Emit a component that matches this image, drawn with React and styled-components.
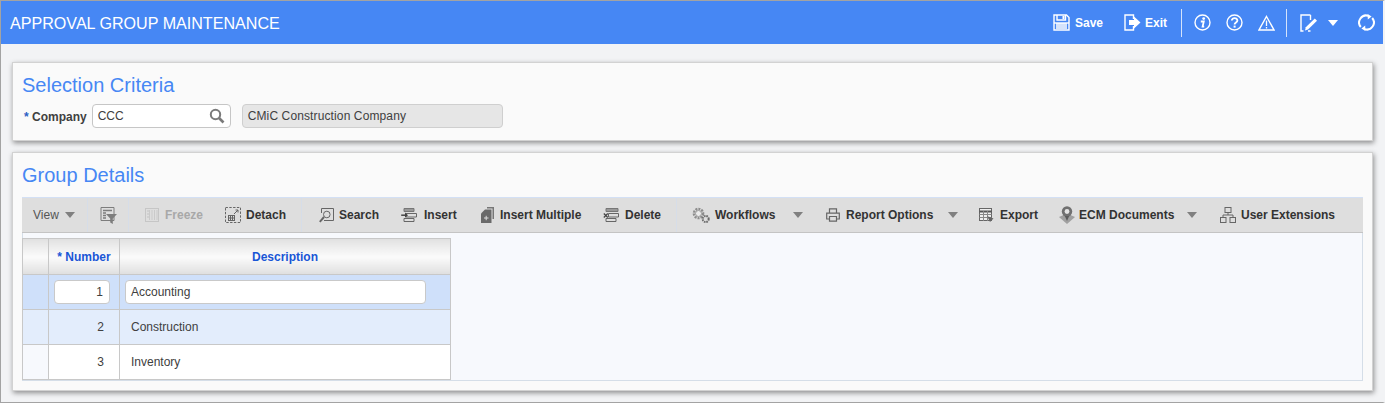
import React from "react";
import styled, { createGlobalStyle } from "styled-components";

const GlobalStyle = createGlobalStyle`
  html, body { margin: 0; padding: 0; background: #f2f3f5; }
  body { font-family: "Liberation Sans", Arial, sans-serif; font-size: 12px; color: #333; }
`;

const Page = styled.div`
  width: 1385px;
  height: 403px;
  box-sizing: border-box;
  border: 1px solid #a3a3a3;
  border-right: 2px solid #f2f3f5;
  background: #f2f3f5;
  overflow: hidden;
`;

const Header = styled.header`
  height: 43px;
  background: #4687f4;
  display: flex;
  align-items: center;
  padding: 0 8px 0 9px;
  color: #fff;
`;

const Title = styled.h1`
  margin: 2px 0 0;
  font-size: 16.1px;
  font-weight: 400;
  flex: 1;
`;

const HeadBtn = styled.div`
  display: flex;
  align-items: center;
  gap: ${(p) => p.$gap ?? 5}px;
  margin-left: ${(p) => p.$ml ?? 0}px;
  font-weight: 700;
  font-size: 12px;
  svg { display: block; }
`;

const HeadSep = styled.div`
  width: 1px;
  height: 28px;
  background: #d5e3fb;
  margin-left: ${(p) => p.$ml}px;
`;

const Panel = styled.section`
  margin: ${(p) => p.$mt}px 10px 0 11px;
  height: ${(p) => p.$h}px;
  box-sizing: border-box;
  background: #fafafa;
  border: 1px solid #d2d2d2;
  box-shadow: 1px 2px 5px rgba(0, 0, 0, 0.42);
  padding: 0 9px;
`;

const PanelTitle = styled.h2`
  margin: 0;
  padding-top: 10px;
  height: 32px;
  box-sizing: border-box;
  font-size: 20px;
  line-height: 24px;
  font-weight: 400;
  color: #4687f4;
`;

const FormRow = styled.div`
  display: flex;
  align-items: center;
  margin-top: 9px;
`;

const Label = styled.label`
  font-weight: 700;
  color: #404040;
  margin-left: 2px;
  margin-right: 5px;
  position: relative;
  top: 1px;
  span { color: #2a5fc4; }
`;

const Field = styled.div`
  box-sizing: border-box;
  height: 24px;
  width: ${(p) => p.$w}px;
  margin-left: ${(p) => p.$ml ?? 0}px;
  border: 1px solid ${(p) => (p.$readOnly ? "#cfcfcf" : "#c6c6c6")};
  border-radius: 4px;
  background: ${(p) => (p.$readOnly ? "#e6e6e6" : "#fff")};
  padding: 0 5px;
  display: flex;
  align-items: center;
  justify-content: space-between;
  color: #404040;
  letter-spacing: ${(p) => (p.$readOnly ? "0.12px" : "0")};
`;

const Toolbar = styled.div`
  margin-top: 12px;
  height: 36px;
  box-sizing: border-box;
  background: #dedede;
  border-top: 1px solid #d3e0f5;
  border-bottom: 1px solid #c4c4c4;
  display: flex;
  align-items: center;
  font-weight: 700;
  color: #333;
  white-space: nowrap;
`;

const Tool = styled.div`
  display: flex;
  align-items: center;
  flex: none;
  width: ${(p) => p.$w}px;
  padding-left: ${(p) => p.$pl ?? 16}px;
  box-sizing: border-box;
  gap: ${(p) => p.$gap ?? 6}px;
  color: ${(p) => (p.$off ? "#a8a8a8" : p.$plain ? "#555" : "#333")};
  font-weight: ${(p) => (p.$plain ? 400 : 700)};
  svg { display: block; flex: none; }
`;

const ToolSep = styled.div`
  width: 1px;
  height: 34px;
  flex: none;
  background: #d6dde8;
`;

const Arrow = styled.i`
  display: block;
  flex: none;
  width: 0;
  height: 0;
  border-left: 5px solid transparent;
  border-right: 5px solid transparent;
  border-top: 6px solid ${(p) => p.$c ?? "#808080"};
  margin-left: ${(p) => p.$ml ?? 0}px;
`;

const GridArea = styled.div`
  height: 148px;
  box-sizing: border-box;
  background: #f7f9fd;
  border: 1px solid #d5dee8;
  border-top: 0;
  padding-top: 5px;
`;

const Table = styled.table`
  width: 428px;
  margin-left: -1px;
  border-collapse: collapse;
  table-layout: fixed;
  th, td { border: 1px solid #c8c8c8; padding: 0; box-sizing: border-box; }
  th {
    height: 36px;
    background: linear-gradient(#e2e2e2, #fbfbfb 50%, #dfdfdf);
    color: #1a56d6;
    font-size: 12px;
  }
`;

const Row = styled.tr`
  background: ${(p) => p.$bg};
  td { height: 35px; color: #404040; }
  td:first-child { background: ${(p) => p.$side}; }
`;

const NumCell = styled.td`
  text-align: right;
  padding-right: 15px !important;
`;

const TextCell = styled.td`
  padding-left: 11px !important;
`;

const CellInput = styled.div`
  box-sizing: border-box;
  height: 24px;
  width: ${(p) => p.$w}px;
  margin-left: ${(p) => p.$ml}px;
  background: #fff;
  border: 1px solid #c9c9c9;
  border-radius: 4px;
  padding: 0 ${(p) => (p.$right ? 6 : 5)}px;
  display: flex;
  align-items: center;
  justify-content: ${(p) => (p.$right ? "flex-end" : "flex-start")};
`;

const W = { fill: "none", stroke: "#fff", strokeWidth: 1.4 };
const G = { fill: "none", stroke: "#666", strokeWidth: 1 };

const SaveIcon = () => (
  <svg width="17" height="17" viewBox="0 0 17 17">
    <path d="M1 1h12.5L16 3.5V16H1z" {...W} />
    <path d="M4 1v5h8.5V1" {...W} />
    <rect x="9.5" y="2" width="2" height="3" fill="#fff" />
    <rect x="3" y="9" width="11" height="6.5" fill="#d5e3fb" />
    <path d="M1 9h15" {...W} />
  </svg>
);
const ExitIcon = () => (
  <svg width="17" height="17" viewBox="0 0 17 17">
    <path d="M9.5 5V1H1v15h8.5v-4" {...W} />
    <path d="M5 6h5V2.5l6.5 6-6.5 6V11H5z" fill="#fff" />
  </svg>
);
const InfoIcon = () => (
  <svg width="17" height="17" viewBox="0 0 17 17">
    <circle cx="8.5" cy="8.5" r="7.5" {...W} />
    <circle cx="9.7" cy="4.6" r="1.4" fill="#fff" />
    <path d="M6.8 7.5h3L8.6 12.6h1.6" fill="none" stroke="#fff" strokeWidth="1.8" />
  </svg>
);
const HelpIcon = () => (
  <svg width="17" height="17" viewBox="0 0 17 17">
    <circle cx="8.5" cy="8.5" r="7.5" {...W} />
    <path d="M5.8 6.6c0-3.4 5.6-3.4 5.6 0 0 2-2.8 2-2.8 4" fill="none" stroke="#fff" strokeWidth="1.8" />
    <rect x="7.6" y="11.6" width="2" height="2" fill="#fff" />
  </svg>
);
const WarnIcon = () => (
  <svg width="17" height="16" viewBox="0 0 17 16">
    <path d="M8.5 1.5L16 15H1z" {...W} />
    <path d="M8.5 5.5v5.5M8.5 12v1.6" stroke="#fff" strokeWidth="1.3" />
  </svg>
);
const NoteIcon = () => (
  <svg width="18" height="18" viewBox="0 0 18 18">
    <path d="M10.5 1H1v16h2.5M10.5 1v5M8 17h2.5" {...W} />
    <path d="M5 16.5l.8-3.2L14.8 4.5l2.2 2.2-9 8.8z" fill="#fff" />
  </svg>
);
const RefreshIcon = () => (
  <svg width="17" height="17" viewBox="0 0 17 17">
    <path d="M2.8 13A7 7 0 0 1 10.5 1.9M14.2 4a7 7 0 0 1-7.7 11.1" fill="none" stroke="#fff" strokeWidth="2" />
    <path d="M9.6 0l4 2.6L9.8 5.4zM7.4 17l-4-2.6 3.8-2.8z" fill="#fff" />
  </svg>
);
const SearchGlyph = () => (
  <svg width="16" height="16" viewBox="0 0 16 16">
    <circle cx="6.5" cy="6.5" r="4.7" fill="none" stroke="#7a7a7a" strokeWidth="2" />
    <path d="M10 10l4.5 4.5" stroke="#7a7a7a" strokeWidth="2.6" />
  </svg>
);

const FilterIcon = () => (
  <svg width="17" height="17" viewBox="0 0 17 17">
    <path d="M1 .5h13v13H1z" fill="#dedede" stroke="#7d7d7d" />
    <path d="M3 3.5h9M3 6h3M3 8.5h3M3 11h3" stroke="#7d7d7d" strokeWidth="1.4" />
    <path d="M6 7h11l-4.2 4.5V17l-2.6-1.5v-4z" fill="#7d7d7d" />
  </svg>
);
const FreezeIcon = () => (
  <svg width="14" height="14" viewBox="0 0 14 14">
    <rect x="0.5" y="0.5" width="13" height="13" fill="none" stroke="#c6c6c6" />
    <path d="M4.5 2v10M7 2v10M9.5 2v10M12 2v10" stroke="#cacaca" />
    <path d="M2 3h2M2 6h2M2 9h2" stroke="#c2c2c2" />
  </svg>
);
const DetachIcon = () => (
  <svg width="16" height="16" viewBox="0 0 16 16">
    <rect x="0.5" y="0.5" width="15" height="15" fill="none" stroke="#666" strokeDasharray="2.4 1.4" />
    <rect x="3.5" y="8.5" width="6" height="5" fill="none" stroke="#666" />
    <path d="M5.5 9v4M7.5 9v4M3.5 11h6M9 7l4-4M10.5 3H13v2.5" stroke="#666" fill="none" />
  </svg>
);
const SearchIcon = () => (
  <svg width="15" height="15" viewBox="0 0 15 15">
    <path d="M2.5 5V.5h12v12H5" {...G} />
    <circle cx="7.8" cy="6.5" r="3.3" {...G} />
    <path d="M5 9L.8 13.8" stroke="#666" strokeWidth="1.9" />
  </svg>
);
const InsertIcon = () => (
  <svg width="16" height="14" viewBox="0 0 16 14">
    <path d="M3 .5h10v3H3z" fill="#999" stroke="#777" />
    <path d="M5 5.5h10.5v3.5H5zM3 10.5h10v3H3z" {...G} />
    <path d="M.2 7.2h5" stroke="#444" strokeWidth="1.5" fill="none" />
    <path d="M4 4.6l3 2.6-3 2.6z" fill="#444" />
  </svg>
);
const InsertMultipleIcon = () => (
  <svg width="13" height="16" viewBox="0 0 13 16">
    <path d="M6 0h7v12h-1.5V1.5H6z" fill="#777" />
    <path d="M4 2.5h6.5V16H0V6.5z" fill="#6a6a6a" />
    <path d="M3 11h4.5M5.2 8.8v4.4" stroke="#ddd" />
  </svg>
);
const DeleteIcon = () => (
  <svg width="16" height="14" viewBox="0 0 16 14">
    <path d="M3 .5h12v3H3z" fill="#999" stroke="#777" />
    <path d="M5.5 5.5h10v3.5h-10zM3 10.5h10v3H3z" {...G} />
    <path d="M.8 5.5l4 4M4.8 5.5l-4 4" stroke="#444" strokeWidth="1.2" />
  </svg>
);
const WorkflowsIcon = () => (
  <svg width="18" height="16" viewBox="0 0 18 16">
    <circle cx="6.5" cy="6.5" r="4.6" fill="none" stroke="#8c8c8c" strokeWidth="2.4" strokeDasharray="2 1" />
    <circle cx="6.5" cy="6.5" r="3" fill="#eaeaea" stroke="#9a9a9a" />
    <circle cx="13.7" cy="12" r="3" fill="none" stroke="#6a6a6a" strokeWidth="2" strokeDasharray="1.6 .8" />
    <circle cx="13.7" cy="12" r="1" fill="#ddd" />
  </svg>
);
const PrintIcon = () => (
  <svg width="14" height="14" viewBox="0 0 14 14">
    <path d="M3.5 5V.8h7V5M3 11H.7V5.2h12.6V11H11" fill="none" stroke="#666" strokeWidth="1.2" />
    <path d="M3.5 8.5h7v4.7h-7z" fill="none" stroke="#666" strokeWidth="1.2" />
  </svg>
);
const ExportIcon = () => (
  <svg width="15" height="14" viewBox="0 0 15 14">
    <rect x="0.5" y="0.5" width="12" height="12" fill="#eee" stroke="#666" />
    <path d="M.5 3.5h12" stroke="#555" strokeWidth="2" />
    <path d="M.5 6.5h12M.5 9.5h12M4.5 3v10M8.5 3v10" stroke="#888" />
    <path d="M8 8l6.5 2.5L11 14z" fill="#666" />
  </svg>
);
const EcmIcon = () => (
  <svg width="16" height="18" viewBox="0 0 16 18">
    <path d="M0 11l8-3.5 8 3.5-8 7z" fill="#a0a0a0" />
    <circle cx="8" cy="5.5" r="5.2" fill="#707070" />
    <circle cx="8" cy="5.5" r="2.4" fill="#e4e4e4" />
    <path d="M5.8 10h4.4L8 15z" fill="#5c5c5c" />
  </svg>
);
const UserExtIcon = () => (
  <svg width="16" height="16" viewBox="0 0 16 16">
    <rect x="5" y="0.5" width="6" height="5" {...G} />
    <rect x="0.5" y="10.5" width="5.5" height="5" {...G} />
    <rect x="10" y="10.5" width="5.5" height="5" {...G} />
    <path d="M8 5.5V8M3 10.5V8h10v2.5" {...G} />
  </svg>
);

export default function App() {
  return (
    <Page>
      <GlobalStyle />
      <Header>
        <Title>APPROVAL GROUP MAINTENANCE</Title>
        <HeadBtn><SaveIcon />Save</HeadBtn>
        <HeadBtn $ml={21} $gap={4}><ExitIcon />Exit</HeadBtn>
        <HeadSep $ml={14} />
        <HeadBtn $ml={12}><InfoIcon /></HeadBtn>
        <HeadBtn $ml={15}><HelpIcon /></HeadBtn>
        <HeadBtn $ml={15}><WarnIcon /></HeadBtn>
        <HeadSep $ml={11} />
        <HeadBtn $ml={13}><NoteIcon /></HeadBtn>
        <Arrow $c="#fff" $ml={10} />
        <HeadBtn $ml={20}><RefreshIcon /></HeadBtn>
      </Header>

      <Panel $mt={18} $h={79}>
        <PanelTitle>Selection Criteria</PanelTitle>
        <FormRow>
          <Label><span>*</span> Company</Label>
          <Field $w={139}>CCC<SearchGlyph /></Field>
          <Field $w={261} $ml={11} $readOnly>CMiC Construction Company</Field>
        </FormRow>
      </Panel>

      <Panel $mt={11} $h={239}>
        <PanelTitle>Group Details</PanelTitle>
        <Toolbar>
          <Tool $w={65} $pl={11} $plain>View <Arrow /></Tool>
          <ToolSep />
          <Tool $w={40} $pl={12}><FilterIcon /></Tool>
          <ToolSep />
          <Tool $w={80} $off><FreezeIcon />Freeze</Tool>
          <Tool $w={92} $gap={5}><DetachIcon />Detach</Tool>
          <ToolSep />
          <Tool $w={83} $pl={17} $gap={5}><SearchIcon />Search</Tool>
          <Tool $w={80} $gap={7}><InsertIcon />Insert</Tool>
          <Tool $w={122}><InsertMultipleIcon />Insert Multiple</Tool>
          <Tool $w={89}><DeleteIcon />Delete</Tool>
          <ToolSep />
          <Tool $w={133} $pl={15} $gap={5}><WorkflowsIcon />Workflows<Arrow $ml={13} /></Tool>
          <Tool $w={153}><PrintIcon />Report Options<Arrow $ml={9} /></Tool>
          <Tool $w={80}><ExportIcon />Export</Tool>
          <Tool $w={161} $gap={4}><EcmIcon />ECM Documents<Arrow $ml={9} /></Tool>
          <Tool $w={130} $gap={5}><UserExtIcon />User Extensions</Tool>
        </Toolbar>
        <GridArea>
          <Table>
            <colgroup>
              <col width="26" />
              <col width="71" />
              <col width="331" />
            </colgroup>
            <thead>
              <tr>
                <th />
                <th>* Number</th>
                <th>Description</th>
              </tr>
            </thead>
            <tbody>
              <Row $bg="#cfe0fa" $side="#cfe0fa">
                <td />
                <td><CellInput $w={56} $ml={5} $right>1</CellInput></td>
                <td><CellInput $w={301} $ml={5}>Accounting</CellInput></td>
              </Row>
              <Row $bg="#e3edfc" $side="#e3edfc">
                <td />
                <NumCell>2</NumCell>
                <TextCell>Construction</TextCell>
              </Row>
              <Row $bg="#fff" $side="#f7f9fd">
                <td />
                <NumCell>3</NumCell>
                <TextCell>Inventory</TextCell>
              </Row>
            </tbody>
          </Table>
        </GridArea>
      </Panel>
    </Page>
  );
}
